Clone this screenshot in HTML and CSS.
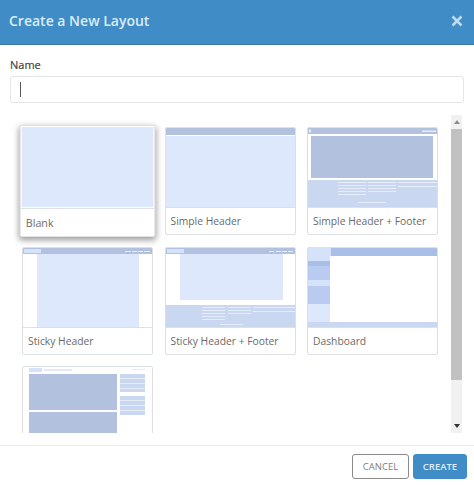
FILE: index.html
```html
<!DOCTYPE html>
<html lang="en">
<head>
<meta charset="utf-8">
<title>Create a New Layout</title>
<link rel="stylesheet" href="styles.css">
</head>
<body>
<div class="modal">
  <header class="modal-header">
    <h1 class="modal-title">Create a New Layout</h1>
    <svg class="close" viewBox="0 0 12 12" aria-label="Close"><path d="M1.5 1.5 L10.5 10.5 M10.5 1.5 L1.5 10.5"/></svg>
  </header>
  <div class="modal-body">
    <label class="field-label">Name</label>
    <div class="input"><span class="caret"></span></div>
    <div class="chooser">
      <div class="scroll-pane">
        <div class="grid">
          <div class="card selected">
            <svg class="thumb" viewBox="0 0 129 79" preserveAspectRatio="none"><rect class="light" x="1" y="1" width="127" height="77"/></svg>
            <div class="card-label">Blank</div>
          </div>
          <div class="card">
            <svg class="thumb" viewBox="0 0 129 79" preserveAspectRatio="none">
              <rect class="dark" width="129" height="7"/>
              <rect class="light" y="8" width="129" height="71"/>
            </svg>
            <div class="card-label">Simple Header</div>
          </div>
          <div class="card">
            <svg class="thumb" viewBox="0 0 129 79" preserveAspectRatio="none">
              <rect class="dark" width="129" height="6"/>
              <rect class="soft" x="1" y="1.5" width="2" height="3"/>
              <rect class="soft" x="114" y="2.5" width="14" height="1.5"/>
              <rect class="dark" x="3" y="8" width="122" height="42"/>
              <rect class="mid" y="52" width="129" height="27"/>
              <rect class="soft" x="30" y="54" width="28" height="1"/>
              <rect class="soft" x="30" y="57" width="28" height="1"/>
              <rect class="soft" x="30" y="60" width="28" height="1"/>
              <rect class="soft" x="30" y="63" width="28" height="1"/>
              <rect class="soft" x="30" y="66" width="28" height="1"/>
              <rect class="soft" x="60" y="54" width="28" height="1"/>
              <rect class="soft" x="60" y="57" width="28" height="1"/>
              <rect class="soft" x="60" y="60" width="28" height="1"/>
              <rect class="soft" x="60" y="63" width="28" height="1"/>
              <rect class="soft" x="90" y="54" width="39" height="1"/>
              <rect class="soft" x="90" y="58" width="39" height="1"/>
              <rect class="soft" x="50" y="74" width="28" height="1"/>
            </svg>
            <div class="card-label">Simple Header + Footer</div>
          </div>
          <div class="card">
            <svg class="thumb" viewBox="0 0 129 79" preserveAspectRatio="none">
              <rect class="dark" width="129" height="6"/>
              <rect class="pale" x="1" y="1" width="17" height="4"/>
              <rect class="soft" x="102" y="3" width="6" height="1"/>
              <rect class="soft" x="109" y="3" width="5" height="1"/>
              <rect class="soft" x="115" y="3" width="5" height="1"/>
              <rect class="soft" x="121" y="3" width="6" height="1"/>
              <rect class="light" x="14" y="6" width="102" height="73"/>
            </svg>
            <div class="card-label">Sticky Header</div>
          </div>
          <div class="card">
            <svg class="thumb" viewBox="0 0 129 79" preserveAspectRatio="none">
              <rect class="dark" width="129" height="6"/>
              <rect class="pale" x="1" y="1" width="17" height="4"/>
              <rect class="soft" x="103" y="3" width="5" height="1"/>
              <rect class="soft" x="110" y="3" width="5" height="1"/>
              <rect class="soft" x="116" y="3" width="5" height="1"/>
              <rect class="soft" x="122" y="3" width="5" height="1"/>
              <rect class="light" x="14" y="6" width="103" height="46"/>
              <rect class="mid" y="57" width="129" height="22"/>
              <rect class="soft" x="36" y="59" width="23" height="1"/>
              <rect class="soft" x="36" y="62" width="23" height="1"/>
              <rect class="soft" x="36" y="65" width="23" height="1"/>
              <rect class="soft" x="36" y="68" width="23" height="1"/>
              <rect class="soft" x="36" y="71" width="23" height="1"/>
              <rect class="soft" x="62" y="59" width="23" height="1"/>
              <rect class="soft" x="62" y="62" width="23" height="1"/>
              <rect class="soft" x="62" y="65" width="23" height="1"/>
              <rect class="soft" x="87" y="59" width="42" height="1"/>
              <rect class="soft" x="87" y="63" width="42" height="1"/>
              <rect class="soft" x="54" y="76" width="23" height="1"/>
            </svg>
            <div class="card-label">Sticky Header + Footer</div>
          </div>
          <div class="card">
            <svg class="thumb" viewBox="0 0 129 79" preserveAspectRatio="none">
              <rect class="blue" width="129" height="8"/>
              <rect class="pale" width="23" height="8"/>
              <rect class="pale" y="8" width="22" height="5"/>
              <rect class="blue" y="13" width="22" height="5"/>
              <rect class="blue-mid" y="18" width="22" height="14"/>
              <rect class="pale" y="32" width="22" height="6"/>
              <rect class="blue-mid" y="38" width="22" height="18"/>
              <rect class="light" y="56" width="22" height="18"/>
              <rect class="mid" y="74" width="129" height="5"/>
            </svg>
            <div class="card-label">Dashboard</div>
          </div>
          <div class="card">
            <svg class="thumb" viewBox="0 0 129 79" preserveAspectRatio="none">
              <rect class="pale" x="6" y="1" width="13" height="4"/>
              <rect class="faint" x="21" y="2" width="28" height="2"/>
              <rect class="faint" x="109" y="2" width="13" height="1"/>
              <rect class="dark" x="6" y="7" width="88" height="36"/>
              <rect class="dark" x="6" y="45" width="88" height="34"/>
              <rect class="mid" x="97" y="7" width="25" height="18"/>
              <rect class="soft" x="97" y="11" width="25" height="1"/>
              <rect class="soft" x="97" y="16" width="25" height="1"/>
              <rect class="soft" x="97" y="21" width="25" height="1"/>
              <rect class="mid" x="97" y="29" width="25" height="19"/>
              <rect class="soft" x="97" y="33" width="25" height="1"/>
              <rect class="soft" x="97" y="38" width="25" height="1"/>
              <rect class="soft" x="97" y="43" width="25" height="1"/>
            </svg>
          </div>
        </div>
      </div>
      <div class="scrollbar">
        <span class="arrow up"></span>
        <span class="track"><span class="bar"></span></span>
        <span class="arrow down"></span>
      </div>
    </div>
  </div>
  <footer class="modal-footer">
    <button class="btn btn-cancel">CANCEL</button>
    <button class="btn btn-create">CREATE</button>
  </footer>
</div>
</body>
</html>
```
FILE: styles.css
```css
* { box-sizing: border-box; }
html, body { margin: 0; padding: 0; background: #fff; }
body { width: 474px; height: 485px; overflow: hidden; font-family: "Open Sans", "Liberation Sans", sans-serif; color: #555; }
.modal { display: flex; flex-direction: column; height: 485px; }
.modal-header {
  height: 45px; flex: none; display: flex; align-items: center; justify-content: space-between;
  padding: 0 10px 3px 9px; background: #3f8cc6; border-bottom: 1px solid #3a7aa8;
}
.modal-title { margin: 0; font-size: 14px; font-weight: 600; color: #dcecf7; }
.close { width: 12px; height: 12px; margin-right: 1px; }
.close path { fill: none; stroke: #bcdcf2; stroke-width: 2.6; }
.modal-body { flex: none; height: 400px; padding: 12px 10px 0; }
.field-label { display: block; font-size: 11px; font-weight: 400; line-height: 16px; color: #444; -webkit-text-stroke: 0.2px #444; }
.input { height: 27px; margin-top: 3px; border: 1px solid #e3e5e7; border-radius: 3px; padding: 5px 9px; background: #fff; }
.caret { display: block; width: 1px; height: 15px; background: #555; }
.chooser { display: flex; justify-content: space-between; margin-top: 12px; height: 318px; padding-right: 2px; }
.scroll-pane { width: 441px; overflow: hidden; }
.grid { display: grid; grid-template-columns: repeat(3, 131px); grid-auto-rows: 108px; gap: 11.5px; padding: 12px 0 0 12px; }
.card { background: #fff; border: 1px solid #dcdfe3; border-radius: 2px; display: flex; flex-direction: column; overflow: hidden; }
.card.selected { transform: scale(1.036); border-color: #e2e2e2; overflow: visible; box-shadow: 0 2px 6px 0 rgba(0,0,0,.4); }
.thumb { display: block; width: 100%; height: 79px; flex: none; }
.card-label { flex: 1; border-top: 1px solid #dcdfe3; padding-left: 5px; font-size: 10.3px; line-height: 26px; color: #6a6a6a; white-space: nowrap; }
.soft { fill: #e6edf9; }
.faint { fill: #e3e8f2; }
.light { fill: #dde8fc; }
.pale { fill: #d5e3fa; }
.mid { fill: #c9d7f0; }
.dark { fill: #b1c1de; }
.blue { fill: #a9bfe8; }
.blue-mid { fill: #b9cbf0; }
.scrollbar { width: 11px; display: flex; flex-direction: column; background: #f1f1f1; }
.arrow { flex: none; height: 14px; display: flex; align-items: center; justify-content: center; }
.arrow::before { content: ""; width: 0; height: 0; border-left: 3px solid transparent; border-right: 3px solid transparent; }
.arrow.up::before { border-bottom: 4px solid #8c8c8c; }
.arrow.down::before { border-top: 4px solid #333; }
.track { flex: 1; display: block; }
.bar { display: block; height: 251px; background: #c1c1c1; }
.modal-footer { flex: 1; display: flex; justify-content: flex-end; align-items: flex-start; gap: 4px; border-top: 1px solid #ececec; padding: 8px 7px 0 0; }
.btn { height: 25px; font-family: inherit; font-size: 9.5px; font-weight: 400; border-radius: 3px; padding: 0; }
.btn-cancel { width: 57px; background: #fff; border: 1px solid #8a8a8a; color: #808080; }
.btn-create { width: 54px; background: #3f8cc6; border: 1px solid #3f8cc6; color: #dcecf7; font-weight: 600; }
```
